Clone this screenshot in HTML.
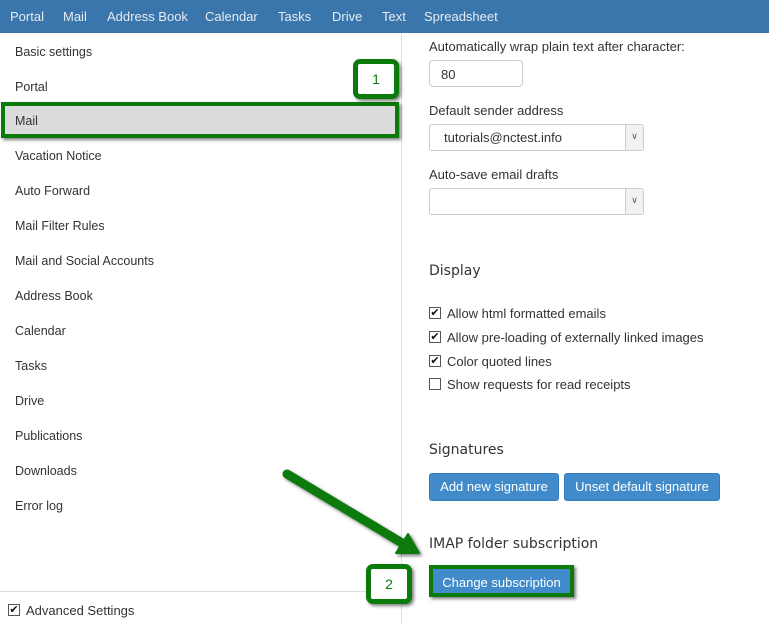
<!DOCTYPE html>
<html><head><style>
body{margin:0;width:769px;height:624px;position:relative;overflow:hidden;font-family:"Liberation Sans",Arial,sans-serif;font-size:13px;color:#333;background:#fff}
.top{position:absolute;left:0;top:0;width:769px;height:33px;background:#3a76ab}
.top span{position:absolute;top:9px;color:#e4ecf4;font-size:13px}
.side{position:absolute;left:0;top:33px;width:401px;height:591px;border-right:1px solid #ddd}
.it{position:absolute;left:15px;font-size:12.5px;color:#333}
.lbl{position:absolute;left:429px;font-size:13px}
.box{position:absolute;border:1px solid #ccc;border-radius:4px;background:#fff;box-sizing:border-box}
.sel .ar{position:absolute;right:0;top:0;width:17px;height:100%;border-left:1px solid #ccc;background:#f2f2f2;font-size:9px;text-align:center;line-height:22px;color:#555}
h3{position:absolute;left:429px;margin:0;font-weight:normal;font-size:14px;color:#333;font-family:"DejaVu Sans",sans-serif}
.cb{position:absolute;left:429px;width:12px;height:12px;border:1px solid #555;box-sizing:border-box;background:#fff;font-size:11px;line-height:10px;text-align:center;color:#111}
.ct{position:absolute;left:447px;font-size:13px}
.btn{position:absolute;background:#428bca;border:1px solid #357ebd;border-radius:3px;color:#fff;font-size:13px;text-align:center;box-sizing:border-box}
.num{position:absolute;width:36px;height:30px;border:5px solid #0a7a0a;border-radius:7px;background:#fff;color:#0a7a0a;font-size:14px;text-align:center;line-height:30px;box-shadow:2px 2px 3px rgba(0,0,0,.5)}
</style></head><body>
<div class="top">
<span style="left:10px">Portal</span><span style="left:63px">Mail</span><span style="left:107px">Address Book</span><span style="left:205px">Calendar</span><span style="left:278px">Tasks</span><span style="left:332px">Drive</span><span style="left:382px">Text</span><span style="left:424px">Spreadsheet</span>
</div>
<div class="side"></div>
<div class="it" style="top:45px">Basic settings</div>
<div class="it" style="top:80px">Portal</div>
<div style="position:absolute;left:1px;top:102px;width:398px;height:36px;background:#dcdcdc;border:4px solid #0a7a0a;box-sizing:border-box;box-shadow:2px 2px 3px rgba(0,0,0,.5)"></div>
<div class="it" style="top:114px">Mail</div>
<div class="it" style="top:149px">Vacation Notice</div>
<div class="it" style="top:184px">Auto Forward</div>
<div class="it" style="top:219px">Mail Filter Rules</div>
<div class="it" style="top:254px">Mail and Social Accounts</div>
<div class="it" style="top:289px">Address Book</div>
<div class="it" style="top:324px">Calendar</div>
<div class="it" style="top:359px">Tasks</div>
<div class="it" style="top:394px">Drive</div>
<div class="it" style="top:429px">Publications</div>
<div class="it" style="top:464px">Downloads</div>
<div class="it" style="top:499px">Error log</div>
<div style="position:absolute;left:0;top:591px;width:401px;height:1px;background:#ddd"></div>
<div class="cb" style="left:8px;top:604px">✔</div>
<div style="position:absolute;left:26px;top:603px;font-size:13px">Advanced Settings</div>
<div class="num" style="left:353px;top:59px">1</div>

<div class="lbl" style="top:39px">Automatically wrap plain text after character:</div>
<div class="box" style="left:429px;top:60px;width:94px;height:27px;padding:6px 0 0 11px">80</div>
<div class="lbl" style="top:103px">Default sender address</div>
<div class="box sel" style="left:429px;top:124px;width:215px;height:27px;padding:5px 0 0 14px;border-radius:3px">tutorials@nctest.info<div class="ar">&#8744;</div></div>
<div class="lbl" style="top:167px">Auto-save email drafts</div>
<div class="box sel" style="left:429px;top:188px;width:215px;height:27px;border-radius:3px"><div class="ar">&#8744;</div></div>
<h3 style="top:263px">Display</h3>
<div class="cb" style="top:307px">✔</div><div class="ct" style="top:306px">Allow html formatted emails</div>
<div class="cb" style="top:331px">✔</div><div class="ct" style="top:330px">Allow pre-loading of externally linked images</div>
<div class="cb" style="top:355px">✔</div><div class="ct" style="top:354px">Color quoted lines</div>
<div class="cb" style="top:378px"></div><div class="ct" style="top:377px">Show requests for read receipts</div>
<h3 style="top:442px">Signatures</h3>
<div class="btn" style="left:429px;top:473px;width:130px;height:28px;line-height:26px">Add new signature</div>
<div class="btn" style="left:564px;top:473px;width:156px;height:28px;line-height:26px">Unset default signature</div>
<h3 style="top:536px">IMAP folder subscription</h3>
<div class="btn" style="left:429px;top:565px;width:145px;height:32px;line-height:28px;border:4px solid #0a7a0a;border-radius:0;box-shadow:2px 2px 3px rgba(0,0,0,.5)">Change subscription</div>
<div class="num" style="left:366px;top:564px">2</div>
<svg style="position:absolute;left:0;top:0" width="769" height="624">
<defs><filter id="s"><feDropShadow dx="2" dy="2" stdDeviation="1.5" flood-opacity=".5"/></filter></defs>
<g filter="url(#s)" fill="#0a7a0a" stroke="#0a7a0a">
<line x1="287" y1="474" x2="402" y2="543" stroke-width="9" stroke-linecap="round"/>
<polygon points="408,534 419,553 396,553" stroke-width="2" stroke-linejoin="round"/>
</g></svg>
</body></html>
